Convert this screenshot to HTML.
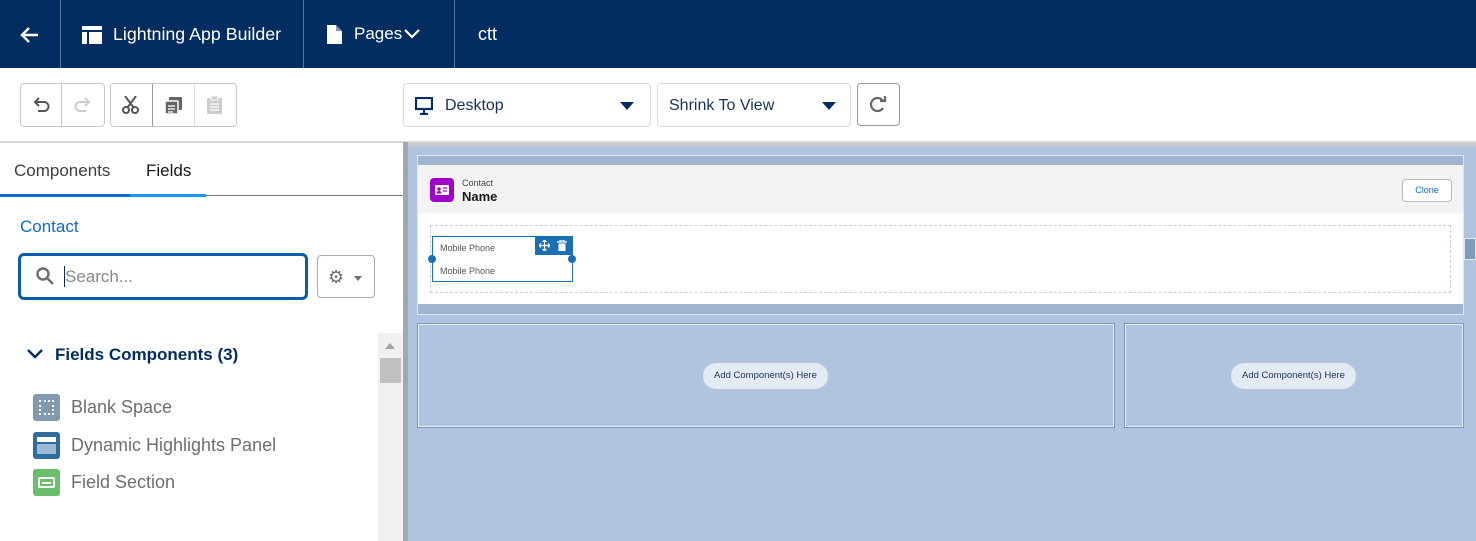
<!DOCTYPE html>
<html><head><meta charset="utf-8"><style>
*{box-sizing:border-box;margin:0;padding:0}
body{width:1476px;height:541px;overflow:hidden;font-family:"Liberation Sans",sans-serif;background:#fff;position:relative}
.a{position:absolute}
.nav{left:0;top:0;width:1476px;height:68px;background:#032d60;color:#fff}
.sep{top:0;width:1px;height:68px;background:#5a7396}
.nt{font-size:18px;top:24px;color:#fff}
.btn{border:1px solid #c9c9c9;border-radius:4px;background:#fff}
.dd{border:1px solid #dddbda;border-radius:4px;background:#fff;font-size:16px;color:#16325c}
.tri{width:0;height:0;border-left:7px solid transparent;border-right:7px solid transparent;border-top:8px solid #032d60}
.item{font-size:18px;color:#706e6b;left:71px}
.ico{left:33px;width:27px;height:27px;border-radius:3px}
.pill{background:#e4ebf5;border-radius:14px;font-size:9.5px;color:#16325c;height:26px;line-height:26px;padding:0 11px}
</style></head><body>
<div class="a nav">
 <svg class="a" style="left:20px;top:26px" width="20" height="18" viewBox="0 0 20 18"><path d="M18 9H3M9 2L2 9l7 7" stroke="#fff" stroke-width="2.4" fill="none"/></svg>
 <div class="a sep" style="left:60px"></div>
 <svg class="a" style="left:82px;top:26px" width="20" height="18" viewBox="0 0 20 18"><rect x="0" y="0" width="20" height="4" fill="#fff"/><rect x="0" y="6" width="5" height="12" fill="#fff"/><rect x="7" y="6" width="13" height="12" fill="#fff"/></svg>
 <div class="a nt" style="left:113px;font-size:17.8px">Lightning App Builder</div>
 <div class="a sep" style="left:303px"></div>
 <svg class="a" style="left:327px;top:25px" width="15" height="19" viewBox="0 0 15 19"><path d="M0 0h9l6 6v13H0z" fill="#fff"/><path d="M9 0v6h6" fill="#032d60" opacity=".5"/></svg>
 <div class="a nt" style="left:354px;font-size:17px">Pages</div>
 <svg class="a" style="left:404px;top:29px" width="16" height="10" viewBox="0 0 16 10"><path d="M1 1l7 7 7-7" stroke="#fff" stroke-width="2.2" fill="none"/></svg>
 <div class="a sep" style="left:454px"></div>
 <div class="a nt" style="left:478px">ctt</div>
</div>
<!-- toolbar -->
<div class="a btn" style="left:20px;top:83px;width:85px;height:44px"></div>
<div class="a" style="left:61px;top:84px;width:1px;height:42px;background:#c9c9c9"></div>
<svg class="a" style="left:32px;top:97px" width="18" height="16" viewBox="0 0 18 16"><path d="M4 5h8a4.5 4.5 0 010 9H6M7 1L3 5l4 4" stroke="#555" stroke-width="2" fill="none"/></svg>
<svg class="a" style="left:74px;top:97px" width="18" height="16" viewBox="0 0 18 16"><path d="M14 5H6a4.5 4.5 0 000 9h6M11 1l4 4-4 4" stroke="#ccc" stroke-width="2" fill="none"/></svg>
<div class="a btn" style="left:110px;top:83px;width:127px;height:44px"></div>
<div class="a" style="left:152px;top:84px;width:1px;height:42px;background:#999"></div>
<div class="a" style="left:194px;top:84px;width:1px;height:42px;background:#ddd"></div>
<svg class="a" style="left:122px;top:96px" width="17" height="18" viewBox="0 0 17 18"><path d="M3 0l9 12M14 0L5 12" stroke="#555" stroke-width="2"/><circle cx="4" cy="14" r="3" stroke="#555" stroke-width="2" fill="none"/><circle cx="13" cy="14" r="3" stroke="#555" stroke-width="2" fill="none"/></svg>
<svg class="a" style="left:165px;top:97px" width="17" height="17" viewBox="0 0 17 17"><rect x="4" y="0" width="13" height="13" rx="1" fill="#666"/><rect x="0" y="4" width="13" height="13" rx="1" fill="#666" stroke="#fff" stroke-width="1.5"/><path d="M3 9h7M3 12h7M3 15h5" stroke="#fff" stroke-width="1.2"/></svg>
<svg class="a" style="left:207px;top:96px" width="15" height="18" viewBox="0 0 15 18"><rect x="0" y="2" width="15" height="16" rx="1" fill="#ccc"/><rect x="4" y="0" width="7" height="4" fill="#ccc" stroke="#fff"/><path d="M3 8h9M3 11h9M3 14h9" stroke="#fff" stroke-width="1.3"/></svg>
<div class="a dd" style="left:403px;top:83px;width:248px;height:44px"></div>
<svg class="a" style="left:415px;top:97px" width="18" height="18" viewBox="0 0 18 18"><rect x="1" y="1" width="16" height="11" stroke="#032d60" stroke-width="2.2" fill="none"/><path d="M9 12v4M5 17h8" stroke="#032d60" stroke-width="2.2"/></svg>
<div class="a" style="left:445px;top:97px;font-size:16px;color:#16325c">Desktop</div>
<div class="a tri" style="left:620px;top:102px"></div>
<div class="a dd" style="left:657px;top:83px;width:194px;height:44px"></div>
<div class="a" style="left:669px;top:97px;font-size:16px;color:#16325c">Shrink To View</div>
<div class="a tri" style="left:822px;top:102px"></div>
<div class="a btn" style="left:857px;top:83px;width:43px;height:43px;border-color:#999"></div>
<svg class="a" style="left:869px;top:96px" width="18" height="17" viewBox="0 0 18 17"><path d="M14 5a6.5 6.5 0 100 7" stroke="#666" stroke-width="2.2" fill="none"/><path d="M11 5h5V0" stroke="#666" stroke-width="2.2" fill="none"/></svg>
<div class="a" style="left:0;top:141px;width:1476px;height:2px;background:#d8d8d8"></div>
<!-- left panel -->
<div class="a" style="left:14px;top:161px;font-size:17px;color:#3e3e3c">Components</div>
<div class="a" style="left:146px;top:161px;font-size:17px;color:#181818">Fields</div>
<div class="a" style="left:0;top:195px;width:403px;height:1px;background:#777"></div>
<div class="a" style="left:0;top:194px;width:130px;height:3px;background:#0b6bcb"></div>
<div class="a" style="left:130px;top:194px;width:76px;height:3px;background:#1b96ff"></div>
<div class="a" style="left:20px;top:217px;font-size:17px;color:#0b6bcb">Contact</div>
<div class="a" style="left:18px;top:253px;width:290px;height:47px;border:3px solid #0b5cab;border-radius:6px"></div>
<svg class="a" style="left:36px;top:267px" width="18" height="18" viewBox="0 0 18 18"><circle cx="7" cy="7" r="5.5" stroke="#706e6b" stroke-width="2.4" fill="none"/><path d="M11 11l6 6" stroke="#706e6b" stroke-width="2.6"/></svg>
<div class="a" style="left:64px;top:266px;width:1px;height:21px;background:#032d60"></div>
<div class="a" style="left:65px;top:267px;font-size:17px;color:#888">Search...</div>
<div class="a btn" style="left:317px;top:255px;width:58px;height:43px;border-color:#aaa"></div>
<div class="a" style="left:328px;top:268px;font-size:18px;color:#706e6b;line-height:18px">⚙</div>
<div class="a" style="left:354px;top:276px;width:0;height:0;border-left:4px solid transparent;border-right:4px solid transparent;border-top:5px solid #706e6b"></div>
<div class="a" style="left:378px;top:333px;width:25px;height:208px;background:#f0f0f0"></div>
<div class="a" style="left:385px;top:343px;width:0;height:0;border-left:5px solid transparent;border-right:5px solid transparent;border-bottom:6px solid #a3a3a3"></div>
<div class="a" style="left:380px;top:358px;width:21px;height:25px;background:#c1c1c1"></div>
<svg class="a" style="left:26px;top:348px" width="18" height="12" viewBox="0 0 18 12"><path d="M2 2l7 7 7-7" stroke="#032d60" stroke-width="2.4" fill="none"/></svg>
<div class="a" style="left:55px;top:345px;font-size:17px;font-weight:bold;color:#032d60">Fields Components (3)</div>
<div class="a ico" style="top:394px;background:#8199af"><div class="a" style="left:6px;top:6px;width:15px;height:15px;border:2px dotted #fff"></div></div>
<div class="a item" style="top:397px">Blank Space</div>
<div class="a ico" style="top:432px;background:#2e6e9e"><div class="a" style="left:4px;top:5px;width:19px;height:5px;background:#fff"></div><div class="a" style="left:4px;top:12px;width:19px;height:10px;background:#9dbad6"></div></div>
<div class="a item" style="top:435px">Dynamic Highlights Panel</div>
<div class="a ico" style="top:469px;background:#6bbf6c"><div class="a" style="left:5px;top:8px;width:17px;height:11px;border:2px solid #fff;border-radius:2px"></div><div class="a" style="left:9px;top:13px;width:9px;height:2px;background:#fff"></div></div>
<div class="a item" style="top:472px">Field Section</div>
<!-- canvas -->
<div class="a" style="left:403px;top:142px;width:5px;height:399px;background:#9fa9b4"></div>
<div class="a" style="left:408px;top:143px;width:1068px;height:398px;background:#b0c4df"></div>
<div class="a" style="left:408px;top:143px;width:1068px;height:4px;background:#c4c9cf"></div>
<div class="a" style="left:417px;top:155px;width:1047px;height:160px;border:1px solid #dfe6f0;background:#a0b5d0"></div>
<div class="a" style="left:418px;top:165px;width:1045px;height:48px;background:#f3f3f3"></div>
<div class="a" style="left:418px;top:213px;width:1045px;height:91px;background:#fff"></div>
<div class="a" style="left:430px;top:178px;width:24px;height:24px;border-radius:4px;background:#a000c8"></div>
<svg class="a" style="left:435px;top:185px" width="14" height="10" viewBox="0 0 14 10"><rect x="0" y="0" width="14" height="10" rx="1" fill="#fff"/><circle cx="4" cy="4" r="1.8" fill="#a000c8"/><path d="M1.5 8.5a2.5 2.5 0 015 0z" fill="#a000c8"/><path d="M8 3h4M8 6h4" stroke="#a000c8" stroke-width="1.2"/></svg>
<div class="a" style="left:462px;top:178px;font-size:9px;color:#444">Contact</div>
<div class="a" style="left:462px;top:189px;font-size:13px;font-weight:bold;color:#181818">Name</div>
<div class="a" style="left:1402px;top:179px;width:50px;height:23px;border:1px solid #bbb;border-radius:4px;background:#fff;font-size:9px;color:#0b6bcb;text-align:center;line-height:21px">Clone</div>
<div class="a" style="left:430px;top:225px;width:1021px;height:68px;border:1px dashed #c5d0de"></div>
<div class="a" style="left:432px;top:236px;width:141px;height:46px;border:1px solid #1b6fb5;background:#fff"></div>
<div class="a" style="left:440px;top:243px;font-size:9px;color:#555">Mobile Phone</div>
<div class="a" style="left:440px;top:266px;font-size:9px;color:#555">Mobile Phone</div>
<div class="a" style="left:535px;top:236px;width:38px;height:19px;background:#1b6fb5"></div>
<svg class="a" style="left:539px;top:240px" width="11" height="11" viewBox="0 0 11 11"><path d="M5.5 0v11M0 5.5h11M3.5 2l2-2 2 2M3.5 9l2 2 2-2M2 3.5l-2 2 2 2M9 3.5l2 2-2 2" stroke="#fff" stroke-width="1.2" fill="none"/></svg>
<svg class="a" style="left:557px;top:240px" width="10" height="11" viewBox="0 0 10 11"><path d="M0 2h10M3 2V0h4v2" stroke="#fff" stroke-width="1.2" fill="none"/><path d="M1.5 3.5h7V11h-7z" fill="#fff"/></svg>
<div class="a" style="left:428px;top:255px;width:8px;height:8px;border-radius:50%;background:#1b6fb5"></div>
<div class="a" style="left:568px;top:255px;width:8px;height:8px;border-radius:50%;background:#1b6fb5"></div>
<div class="a" style="left:1464px;top:238px;width:12px;height:22px;background:#7d9bbd;border:1px solid #dfe6f0"></div>
<div class="a" style="left:417px;top:323px;width:698px;height:105px;border:1px solid #7f95b5;outline:1px solid #e6edf5;outline-offset:-2px"></div>
<div class="a" style="left:1124px;top:323px;width:340px;height:105px;border:1px solid #7f95b5;outline:1px solid #e6edf5;outline-offset:-2px"></div>
<div class="a pill" style="left:703px;top:363px">Add Component(s) Here</div>
<div class="a pill" style="left:1231px;top:363px">Add Component(s) Here</div>
</body></html>
